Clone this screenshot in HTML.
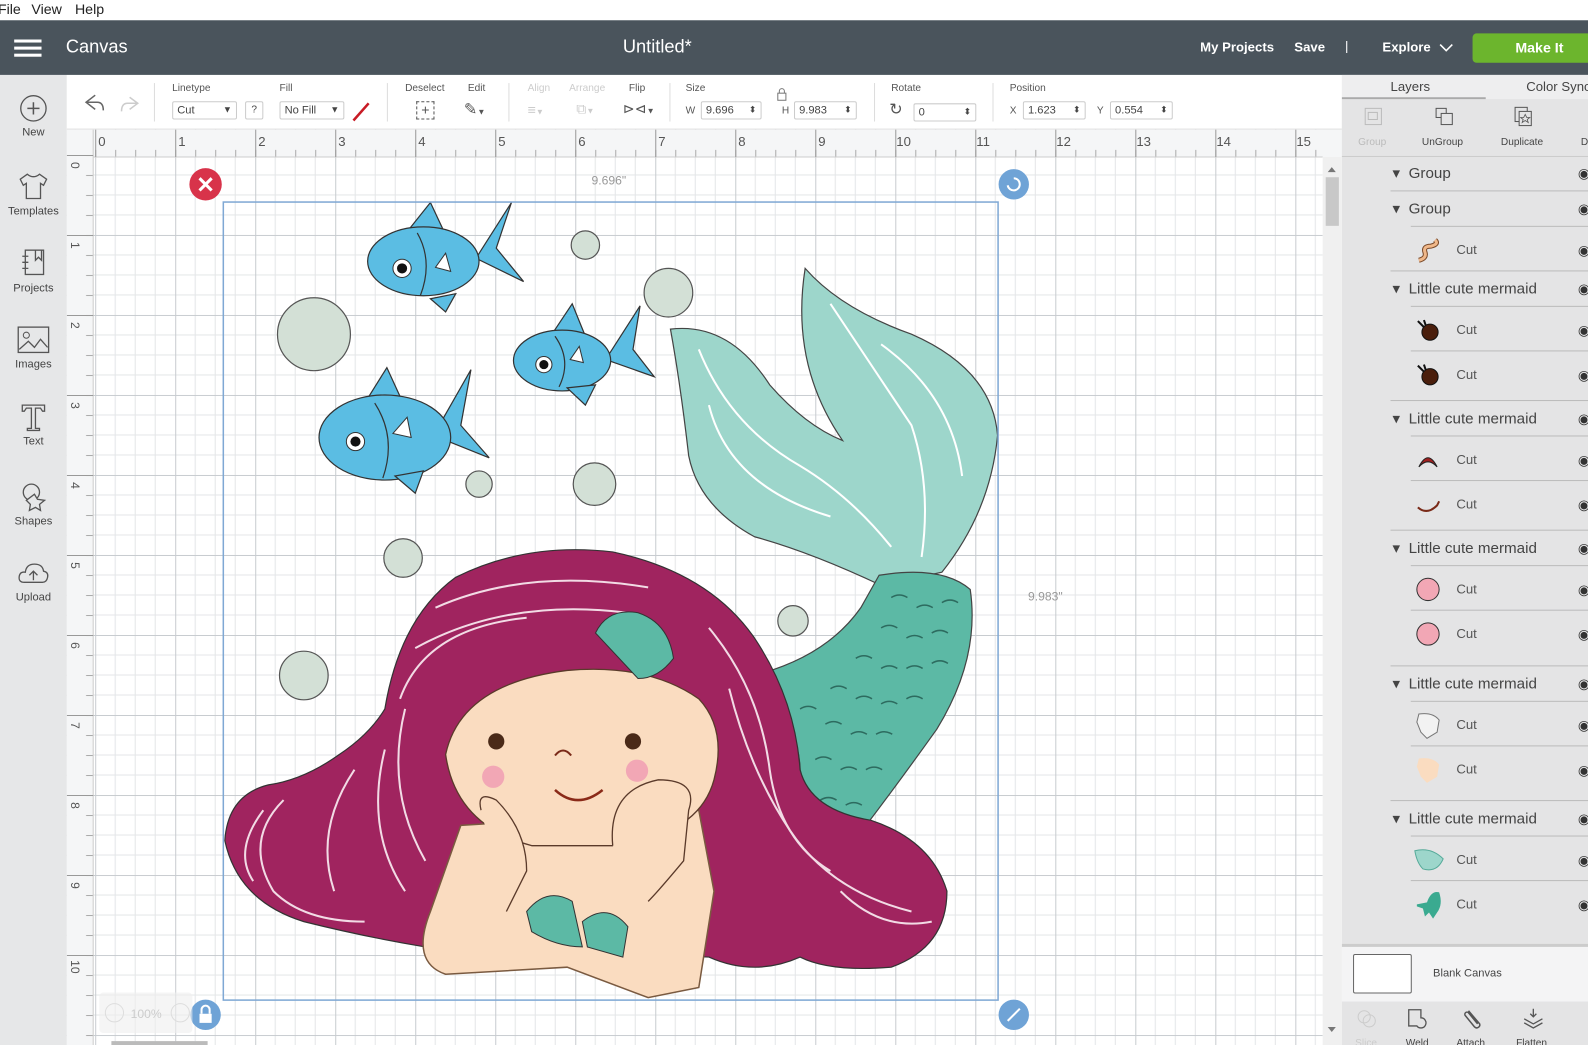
<!DOCTYPE html>
<html><head><meta charset="utf-8">
<style>
*{margin:0;padding:0;box-sizing:border-box}
html,body{width:1588px;height:1045px;overflow:hidden;background:#fff;font-family:"Liberation Sans",sans-serif}
#w{position:absolute;left:0;top:0;width:1568px;height:1032px;transform:scale(1.01276);transform-origin:0 0;overflow:hidden}
.a{position:absolute}
.menu{top:0;left:0;width:1568px;height:20px;background:#fff;font-size:14px;color:#222}
.hdr{top:20px;left:0;width:1568px;height:54px;background:#4a545c;color:#fff}
.side{top:74px;left:0;width:66px;height:971px;background:#e6e7e8}
.si{width:66px;text-align:center;font-size:11px;color:#444}
.tb{top:74px;left:66px;width:1259px;height:54px;background:#fff;border-bottom:1px solid #ddd}
.lbl{font-size:10px;color:#555}
.inp{height:18px;border:1px solid #ccc;border-radius:2px;font-size:11px;color:#444;padding:2px 4px;background:#fff}
.sep{width:1px;height:38px;background:#ddd;top:8px}
.rp{top:74px;left:1325px;width:263px;height:971px;background:#e4e4e5}
.cut{font-size:13px;color:#555}
</style></head><body><div id="w">
<div class="a menu"><span class="a" style="left:-2px;top:1px">File</span><span class="a" style="left:31px;top:1px">View</span><span class="a" style="left:74px;top:1px">Help</span></div>
<div class="a hdr">
 <div class="a" style="left:14px;top:19px;width:27px;height:3px;background:#fff;box-shadow:0 7px 0 #fff,0 14px 0 #fff"></div>
 <div class="a" style="left:65px;top:16px;font-size:18px">Canvas</div>
 <div class="a" style="left:615px;top:16px;font-size:18px">Untitled*</div>
 <div class="a" style="left:1185px;top:19px;font-size:13px;font-weight:bold">My Projects</div>
 <div class="a" style="left:1278px;top:19px;font-size:13px;font-weight:bold">Save</div>
 <div class="a" style="left:1328px;top:18px;font-size:13px">|</div>
 <div class="a" style="left:1365px;top:19px;font-size:13px;font-weight:bold">Explore</div>
 <svg class="a" style="left:1420px;top:22px" width="16" height="10"><path d="M2 2 L8 8 L14 2" stroke="#fff" stroke-width="1.6" fill="none"/></svg>
 <div class="a" style="left:1454px;top:13px;width:140px;height:29px;background:#6cb52d;border-radius:4px;font-size:14px;font-weight:bold;text-align:center;line-height:29px;padding-right:8px">Make It</div>
</div>
<div class="a side">
 <div class="a si" style="top:18px"><svg width="30" height="30"><circle cx="15" cy="15" r="12.5" stroke="#555" stroke-width="1.3" fill="none"/><path d="M15 9v12M9 15h12" stroke="#555" stroke-width="1.5"/></svg><div>New</div></div>
 <div class="a si" style="top:94px"><svg width="34" height="32"><path d="M11 4 L4 9 L7 15 L10 13 L10 28 L24 28 L24 13 L27 15 L30 9 L23 4 Q17 9 11 4Z" stroke="#555" stroke-width="1.3" fill="none"/></svg><div>Templates</div></div>
 <div class="a si" style="top:170px"><svg width="30" height="32"><rect x="7" y="3" width="18" height="24" stroke="#555" stroke-width="1.3" fill="none"/><path d="M4 9h6M4 15h6M4 21h6M17 3v10l3-3 3 3V3" stroke="#555" stroke-width="1.3" fill="none"/></svg><div>Projects</div></div>
 <div class="a si" style="top:247px"><svg width="34" height="30"><rect x="2" y="2" width="30" height="25" stroke="#555" stroke-width="1.3" fill="none"/><circle cx="10" cy="10" r="3" stroke="#555" fill="none"/><path d="M3 24 L12 16 L18 22 L24 14 L31 22" stroke="#555" stroke-width="1.3" fill="none"/></svg><div>Images</div></div>
 <div class="a si" style="top:323px"><svg width="30" height="30"><path d="M4 3h22v6h-2l-2-3h-5v20h4v2H9v-2h4V6H8L6 9H4Z" stroke="#555" stroke-width="1.3" fill="none"/></svg><div>Text</div></div>
 <div class="a si" style="top:400px"><svg width="30" height="32"><circle cx="13" cy="12" r="8" stroke="#555" stroke-width="1.3" fill="none"/><path d="M16 14 L19 19 L26 20 L21 24 L22 30 L17 27 L11 30 L12 24 L8 20 Z" stroke="#555" stroke-width="1.3" fill="#e6e7e8"/></svg><div>Shapes</div></div>
 <div class="a si" style="top:477px"><svg width="34" height="30"><path d="M8 24 Q2 24 3 18 Q4 13 9 14 Q10 6 18 6 Q26 6 27 13 Q32 14 31 19 Q30 24 26 24 Z" stroke="#555" stroke-width="1.3" fill="none"/><path d="M17 22V13M13 17l4-4 4 4" stroke="#555" stroke-width="1.3" fill="none"/></svg><div>Upload</div></div>
</div>
<div class="a tb">
 <svg class="a" style="left:14px;top:16px" width="60" height="22"><path d="M14 4 L5 11 L14 18 M6 11 H16 Q22 11 22 19" stroke="#666" stroke-width="1.5" fill="none"/><path d="M48 6 L56 12 L48 18 M55 12 H46 Q40 12 40 20" stroke="#ccc" stroke-width="1.5" fill="none"/></svg>
 <div class="a sep" style="left:86px"></div>
 <div class="a lbl" style="left:104px;top:8px">Linetype</div>
 <div class="a inp" style="left:104px;top:26px;width:64px">Cut<span style="float:right;font-size:9px">▼</span></div>
 <div class="a inp" style="left:176px;top:26px;width:18px;font-size:10px;text-align:center;padding:2px 0">?</div>
 <div class="a lbl" style="left:210px;top:8px">Fill</div>
 <div class="a inp" style="left:210px;top:26px;width:64px">No Fill<span style="float:right;font-size:9px">▼</span></div>
 <svg class="a" style="left:280px;top:25px" width="22" height="22"><path d="M3 20 L18 3" stroke="#c81b25" stroke-width="2.5"/></svg>
 <div class="a sep" style="left:316px"></div>
 <div class="a lbl" style="left:334px;top:8px">Deselect</div>
 <div class="a" style="left:345px;top:26px;width:18px;height:18px;border:1px dashed #555;text-align:center;font-size:14px;line-height:15px;color:#555">+</div>
 <div class="a lbl" style="left:396px;top:8px">Edit</div>
 <div class="a" style="left:392px;top:24px;font-size:16px;color:#555">✎<span style="font-size:8px">▼</span></div>
 <div class="a sep" style="left:436px"></div>
 <div class="a lbl" style="left:455px;top:8px;color:#ccc">Align</div>
 <div class="a" style="left:455px;top:26px;font-size:14px;color:#ccc">≡<span style="font-size:8px">▼</span></div>
 <div class="a lbl" style="left:496px;top:8px;color:#ccc">Arrange</div>
 <div class="a" style="left:503px;top:25px;font-size:14px;color:#ccc">⧉<span style="font-size:8px">▼</span></div>
 <div class="a lbl" style="left:555px;top:8px">Flip</div>
 <div class="a" style="left:549px;top:25px;font-size:14px;color:#555">⊳⊲<span style="font-size:8px">▼</span></div>
 <div class="a sep" style="left:595px"></div>
 <div class="a lbl" style="left:611px;top:8px">Size</div>
 <svg class="a" style="left:700px;top:12px" width="12" height="14"><rect x="2" y="6" width="8" height="7" stroke="#777" fill="none"/><path d="M3.5 6V4a2.5 2.5 0 0 1 5 0v2" stroke="#777" fill="none"/></svg>
 <div class="a lbl" style="left:611px;top:30px">W</div>
 <div class="a inp" style="left:626px;top:26px;width:60px">9.696<span style="float:right;font-size:9px">⬍</span></div>
 <div class="a lbl" style="left:706px;top:30px">H</div>
 <div class="a inp" style="left:718px;top:26px;width:62px">9.983<span style="float:right;font-size:9px">⬍</span></div>
 <div class="a sep" style="left:797px"></div>
 <div class="a lbl" style="left:814px;top:8px">Rotate</div>
 <div class="a" style="left:812px;top:24px;font-size:16px;color:#555">↻</div>
 <div class="a inp" style="left:836px;top:28px;width:62px">0<span style="float:right;font-size:9px">⬍</span></div>
 <div class="a sep" style="left:914px"></div>
 <div class="a lbl" style="left:931px;top:8px">Position</div>
 <div class="a lbl" style="left:931px;top:30px">X</div>
 <div class="a inp" style="left:944px;top:26px;width:62px">1.623<span style="float:right;font-size:9px">⬍</span></div>
 <div class="a lbl" style="left:1017px;top:30px">Y</div>
 <div class="a inp" style="left:1030px;top:26px;width:62px">0.554<span style="float:right;font-size:9px">⬍</span></div>
</div>

<svg class="a" style="left:66px;top:128px" width="1259" height="917" viewBox="66 128 1259 917">
<defs>
<pattern id="g" x="94" y="153" width="79" height="79" patternUnits="userSpaceOnUse">
<rect width="79" height="79" fill="#fff"/>
<path d="M19.75 0V79M39.5 0V79M59.25 0V79M0 19.75H79M0 39.5H79M0 59.25H79" stroke="#e4e6e8" stroke-width="1"/>
<path d="M0.5 0V79M0 0.5H79" stroke="#c8ccd0" stroke-width="1"/>
</pattern>
<pattern id="tx" x="94" y="128" width="19.75" height="27" patternUnits="userSpaceOnUse"><path d="M0.5 20V27" stroke="#aaa"/></pattern>
<pattern id="ty" x="66" y="153" width="26" height="19.75" patternUnits="userSpaceOnUse"><path d="M19 0.5H26" stroke="#aaa"/></pattern>
</defs>
<rect x="66" y="128" width="1240" height="917" fill="url(#g)"/>
<rect x="92" y="128" width="1233" height="27" fill="#f5f6f7"/>
<rect x="92" y="128" width="1214" height="27" fill="url(#tx)"/>
<rect x="66" y="128" width="26" height="917" fill="#f5f6f7"/>
<rect x="66" y="153" width="26" height="892" fill="url(#ty)"/>
<path d="M92 155H1306M92 128V1045" stroke="#ccc"/>
<g stroke="#999">
<path d="M94.5 128V155M173.5 128V155M252.5 128V155M331.5 128V155M410.5 128V155M489.5 128V155M568.5 128V155M647.5 128V155M726.5 128V155M805.5 128V155M884.5 128V155M963.5 128V155M1042.5 128V155M1121.5 128V155M1200.5 128V155M1279.5 128V155"/>
<path d="M66 153.5H92M66 232.5H92M66 311.5H92M66 390.5H92M66 469.5H92M66 548.5H92M66 627.5H92M66 706.5H92M66 785.5H92M66 864.5H92M66 943.5H92"/>
</g>
<g font-size="13" fill="#555" font-family="Liberation Sans">
<text x="97" y="144">0</text><text x="176" y="144">1</text><text x="255" y="144">2</text><text x="334" y="144">3</text><text x="413" y="144">4</text><text x="492" y="144">5</text><text x="571" y="144">6</text><text x="650" y="144">7</text><text x="729" y="144">8</text><text x="808" y="144">9</text><text x="885" y="144">10</text><text x="964" y="144">11</text><text x="1043" y="144">12</text><text x="1122" y="144">13</text><text x="1201" y="144">14</text><text x="1280" y="144">15</text>
</g>
<g font-size="12" fill="#555" font-family="Liberation Sans">
<text transform="translate(70,160) rotate(90)">0</text><text transform="translate(70,239) rotate(90)">1</text><text transform="translate(70,318) rotate(90)">2</text><text transform="translate(70,397) rotate(90)">3</text><text transform="translate(70,476) rotate(90)">4</text><text transform="translate(70,555) rotate(90)">5</text><text transform="translate(70,634) rotate(90)">6</text><text transform="translate(70,713) rotate(90)">7</text><text transform="translate(70,792) rotate(90)">8</text><text transform="translate(70,871) rotate(90)">9</text><text transform="translate(70,948) rotate(90)">10</text>
</g>
<g fill="#d3e0d6" stroke="#555" stroke-width="1.2">
<circle cx="578" cy="242" r="14"/><circle cx="660" cy="289" r="24"/><circle cx="310" cy="330" r="36"/><circle cx="473" cy="478" r="13"/><circle cx="587" cy="478" r="21"/><circle cx="398" cy="551" r="19"/><circle cx="783" cy="613" r="15"/><circle cx="300" cy="667" r="24"/>
</g>
<g fill="#5bbde3" stroke="#333" stroke-width="1.2">
<path d="M470 255 L505 200 L490 245 L517 278 Z"/><path d="M405 225 L425 200 L440 232Z"/><ellipse cx="418" cy="258" rx="55" ry="34"/><path d="M425 295 L440 308 L450 290Z"/>
<path d="M598 355 L632 302 L625 345 L646 372 Z"/><path d="M545 330 L565 300 L578 332Z"/><ellipse cx="555" cy="356" rx="48" ry="30"/><path d="M560 383 L578 400 L588 380Z"/>
<path d="M428 430 L465 365 L455 420 L483 452 Z"/><path d="M362 395 L382 363 L398 398Z"/><ellipse cx="380" cy="432" rx="65" ry="42"/><path d="M390 470 L410 487 L418 465Z"/>
</g>
<g stroke="#333" stroke-width="1.2" fill="none"><path d="M412 230 Q428 258 415 292"/><path d="M548 332 Q565 356 552 382"/><path d="M370 398 Q392 432 378 472"/></g>
<g fill="#fff" stroke="#333"><path d="M440 250 L445 268 L430 264Z"/><path d="M572 342 L576 358 L563 355Z"/><path d="M402 412 L406 432 L388 428Z"/></g>
<g><circle cx="397" cy="265" r="9" fill="#fff" stroke="#333"/><circle cx="397" cy="265" r="5" fill="#111"/><circle cx="537" cy="360" r="8" fill="#fff" stroke="#333"/><circle cx="537" cy="360" r="4.5" fill="#111"/><circle cx="351" cy="436" r="9" fill="#fff" stroke="#333"/><circle cx="351" cy="436" r="5" fill="#111"/></g>
<path d="M662 325 Q720 318 760 380 Q795 420 832 435 Q780 360 795 265 Q830 305 900 330 Q980 365 985 430 Q978 505 930 565 L870 578 Q800 545 745 530 Q690 500 680 450 Q672 380 662 325Z" fill="#9dd6cb" stroke="#444" stroke-width="1.2"/>
<g stroke="#fff" stroke-width="2" fill="none"><path d="M690 345 Q720 420 790 460 Q840 490 880 540"/><path d="M820 300 Q860 360 900 420 Q920 480 910 550"/><path d="M700 400 Q720 480 820 510"/><path d="M870 340 Q940 390 950 470"/></g>
<path d="M740 668 Q815 650 850 600 L868 568 Q930 558 958 582 Q968 650 925 720 Q875 790 832 845 Q790 845 780 805 Q800 760 780 720 Q760 690 740 668Z" fill="#5cb9a5" stroke="#444" stroke-width="1.2"/>
<g stroke="#2d6b5f" stroke-width="1.5" fill="none">
<path d="M880 590q8-5 16 0M905 600q8-5 16 0M930 595q8-5 16 0M870 620q8-5 16 0M895 630q8-5 16 0M920 625q8-5 16 0M845 650q8-5 16 0M870 660q8-5 16 0M895 660q8-5 16 0M920 655q8-5 16 0M820 680q8-5 16 0M845 690q8-5 16 0M870 695q8-5 16 0M895 690q8-5 16 0M790 700q8-5 16 0M815 715q8-5 16 0M840 725q8-5 16 0M865 725q8-5 16 0M805 750q8-5 16 0M830 760q8-5 16 0M855 760q8-5 16 0M810 790q8-5 16 0M835 795q8-5 16 0M815 825q8-5 16 0"/>
</g>
<path d="M380 700 Q395 610 450 570 Q520 535 605 545 Q700 565 745 630 Q785 690 790 760 Q800 800 860 810 Q920 830 935 880 Q935 935 880 955 Q820 960 790 945 Q745 965 700 945 L420 935 Q360 925 300 910 Q235 890 222 830 Q225 785 265 775 Q300 770 335 745 Q365 725 380 700Z" fill="#a0245f" stroke="#333" stroke-width="1.2"/>
<g stroke="#f2dbe5" stroke-width="2" fill="none">
<path d="M430 600 Q520 560 640 580"/><path d="M410 640 Q500 590 620 605"/><path d="M395 690 Q420 620 520 610"/><path d="M700 620 Q750 680 760 760 Q770 830 820 860"/><path d="M720 680 Q740 760 780 820 Q820 880 900 900"/><path d="M380 740 Q360 820 400 880"/><path d="M350 760 Q310 820 330 880"/><path d="M280 790 Q240 830 270 880 Q300 910 360 910"/><path d="M260 800 Q230 840 250 870"/><path d="M830 880 Q870 920 920 910"/><path d="M400 700 Q380 780 420 850"/>
</g>
<path d="M455 815 L425 900 Q405 950 440 962 L560 955 L640 985 L690 975 L705 880 L690 800Z" fill="#fadcc0" stroke="#7a5a40" stroke-width="1.5"/>
<path d="M440 745 Q455 675 560 662 Q640 655 690 690 Q718 720 705 770 Q690 825 605 835 L525 835 Q450 815 440 745Z" fill="#fadcc0" stroke="#5a3a2a" stroke-width="1.3"/>
<path d="M605 835 Q600 780 650 770 Q690 770 680 800 L675 850 Q650 880 640 890" fill="#fadcc0" stroke="#5a3a2a" stroke-width="1.3"/>
<path d="M475 800 Q470 780 490 790 Q520 820 520 860 L500 900" fill="#fadcc0" stroke="#5a3a2a" stroke-width="1.3"/>
<path d="M588 625 Q600 600 630 605 Q660 615 665 650 Q650 670 630 670Z" fill="#5cb9a5" stroke="#333"/>
<path d="M520 900 Q540 875 565 890 L575 935 Q550 935 525 920Z M575 910 Q600 890 620 915 L615 945 L580 935Z" fill="#5cb9a5" stroke="#333"/>
<circle cx="490" cy="732" r="8" fill="#4a2a18"/><circle cx="625" cy="732" r="8" fill="#4a2a18"/>
<circle cx="487" cy="767" r="11" fill="#f2a7b5"/><circle cx="629" cy="761" r="11" fill="#f2a7b5"/>
<path d="M548 746 Q556 736 564 746" stroke="#7a2a18" stroke-width="2" fill="none"/>
<path d="M548 780 Q570 800 595 780" stroke="#8a2a18" stroke-width="2.5" fill="none"/>
<rect x="220.5" y="199.5" width="765" height="788" fill="none" stroke="#7fa8d4" stroke-width="1.5"/>
<text x="584" y="182" font-size="12" fill="#999" font-family="Liberation Sans">9.696"</text>
<text x="1015" y="593" font-size="12" fill="#999" font-family="Liberation Sans">9.983"</text>
<circle cx="203" cy="182" r="16" fill="#d8334a"/><path d="M197 176L209 188M209 176L197 188" stroke="#fff" stroke-width="3"/>
<circle cx="1001" cy="182" r="15" fill="#6fa3d6"/><path d="M995 183 A6 6 0 1 0 1001 176" stroke="#fff" stroke-width="2" fill="none"/>
<circle cx="203" cy="1002" r="15" fill="#6fa3d6"/><rect x="197" y="1001" width="12" height="9" fill="#fff"/><path d="M199 1001v-4a4 4 0 0 1 8 0v4" stroke="#fff" stroke-width="2" fill="none"/>
<circle cx="1001" cy="1002" r="15" fill="#6fa3d6"/><path d="M995 1008L1007 996" stroke="#fff" stroke-width="2"/>
<rect x="98" y="980" width="92" height="40" rx="4" fill="#eee" opacity=".6"/>
<text x="129" y="1005" font-size="12" fill="#ccc" font-family="Liberation Sans">100%</text>
<circle cx="113" cy="1000" r="9" fill="none" stroke="#ddd"/><circle cx="178" cy="1000" r="9" fill="none" stroke="#ddd"/>
<rect x="110" y="1028" width="95" height="6" fill="#bbb"/>
<rect x="1306" y="155" width="19" height="890" fill="#f0f0f0"/>
<path d="M1311 170 L1315 165 L1319 170Z M1311 1014 L1315 1019 L1319 1014Z" fill="#777"/>
<rect x="1309" y="175" width="13" height="48" fill="#c8c8c8"/>
</svg>

<div class="a rp">
 <div class="a" style="left:0;top:0;width:263px;height:24px;background:#eeeeef"></div>
 <div class="a" style="left:48px;top:4px;font-size:13px;color:#444">Layers</div>
 <div class="a" style="left:0;top:22px;width:142px;height:2px;background:#aaa"></div>
 <div class="a" style="left:182px;top:4px;font-size:13px;color:#444;white-space:nowrap">Color Sync</div>
 <div class="a" style="left:0;top:24px;width:263px;height:57px;background:#e4e4e5;border-bottom:1px solid #ccc"></div>
 <svg class="a" style="left:20px;top:30px" width="22" height="22"><rect x="3" y="3" width="16" height="16" stroke="#bbb" fill="none"/><rect x="6" y="7" width="9" height="7" stroke="#bbb" fill="none"/></svg><div class="a" style="left:16px;top:61px;font-size:10px;color:#bbb">Group</div>
 <svg class="a" style="left:90px;top:30px" width="22" height="22"><rect x="3" y="3" width="10" height="9" stroke="#555" fill="none"/><rect x="8" y="8" width="11" height="11" stroke="#555" fill="#e4e4e5"/></svg><div class="a" style="left:79px;top:61px;font-size:10px;color:#444">UnGroup</div>
 <svg class="a" style="left:168px;top:30px" width="22" height="22"><rect x="3" y="2" width="12" height="14" stroke="#555" fill="none"/><rect x="7" y="6" width="12" height="14" stroke="#555" fill="#e4e4e5"/><path d="M13 9l1.5 3h3l-2.5 2 1 3-3-2-3 2 1-3-2.5-2h3z" stroke="#555" stroke-width=".8" fill="none"/></svg><div class="a" style="left:157px;top:61px;font-size:10px;color:#444">Duplicate</div>
 <div class="a" style="left:236px;top:61px;font-size:10px;color:#444">D</div>
</div>
<div class="a" style="left:1325px;top:155px;width:263px;height:780px;overflow:hidden">
 <div class="a" style="left:50px;top:7px;font-size:15px;color:#444">▾&nbsp; Group</div>
 <div class="a" style="left:48px;top:33px;width:215px;height:1px;background:#bbb"></div>
 <div class="a" style="left:50px;top:42px;font-size:15px;color:#444">▾&nbsp; Group</div>
 <div class="a" style="left:68px;top:68px;width:195px;height:1px;background:#bbb"></div>
 <div class="a cut" style="left:113px;top:84px">Cut</div>
 <div class="a" style="left:70px;top:78px;width:30px;height:28px"><svg width="30" height="28"><path d="M6 24 Q14 22 12 16 Q10 10 18 10 Q26 8 22 4" stroke="#7a4a2a" stroke-width="5" fill="none"/><path d="M6 24 Q14 22 12 16 Q10 10 18 10 Q26 8 22 4" stroke="#f0b88a" stroke-width="3" fill="none"/></svg></div>
 <div class="a" style="left:48px;top:112px;width:215px;height:1px;background:#bbb"></div>
 <div class="a" style="left:50px;top:121px;font-size:15px;color:#444">▾&nbsp; Little cute mermaid</div>
 <div class="a" style="left:68px;top:147px;width:195px;height:1px;background:#bbb"></div>
 <div class="a cut" style="left:113px;top:163px">Cut</div><svg class="a" style="left:72px;top:158px" width="26" height="26"><path d="M3 4l6 6M9 3l2 6" stroke="#111" stroke-width="2"/><circle cx="15" cy="15" r="8" fill="#4a1e0c" stroke="#111"/></svg>
 <div class="a" style="left:68px;top:191px;width:195px;height:1px;background:#bbb"></div>
 <div class="a cut" style="left:113px;top:207px">Cut</div><svg class="a" style="left:72px;top:202px" width="26" height="26"><path d="M3 4l6 6M9 3l2 6" stroke="#111" stroke-width="2"/><circle cx="15" cy="15" r="8" fill="#4a1e0c" stroke="#111"/></svg>
 <div class="a" style="left:48px;top:240px;width:215px;height:1px;background:#bbb"></div>
 <div class="a" style="left:50px;top:249px;font-size:15px;color:#444">▾&nbsp; Little cute mermaid</div>
 <div class="a" style="left:68px;top:275px;width:195px;height:1px;background:#bbb"></div>
 <div class="a cut" style="left:113px;top:291px">Cut</div><svg class="a" style="left:72px;top:286px" width="26" height="26"><path d="M4 20 Q13 2 22 20 Q13 10 4 20Z" fill="#a02020" stroke="#222"/></svg>
 <div class="a" style="left:68px;top:319px;width:195px;height:1px;background:#bbb"></div>
 <div class="a cut" style="left:113px;top:335px">Cut</div><svg class="a" style="left:72px;top:330px" width="26" height="26"><path d="M3 16 Q12 24 22 14 L24 10" stroke="#7a2a18" stroke-width="2" fill="none"/></svg>
 <div class="a" style="left:48px;top:368px;width:215px;height:1px;background:#bbb"></div>
 <div class="a" style="left:50px;top:377px;font-size:15px;color:#444">▾&nbsp; Little cute mermaid</div>
 <div class="a" style="left:68px;top:403px;width:195px;height:1px;background:#bbb"></div>
 <div class="a cut" style="left:113px;top:419px">Cut</div><svg class="a" style="left:72px;top:414px" width="26" height="26"><circle cx="13" cy="13" r="11" fill="#f2a7b5" stroke="#333"/></svg>
 <div class="a" style="left:68px;top:447px;width:195px;height:1px;background:#bbb"></div>
 <div class="a cut" style="left:113px;top:463px">Cut</div><svg class="a" style="left:72px;top:458px" width="26" height="26"><circle cx="13" cy="13" r="11" fill="#f2a7b5" stroke="#333"/></svg>
 <div class="a" style="left:48px;top:502px;width:215px;height:1px;background:#bbb"></div>
 <div class="a" style="left:50px;top:511px;font-size:15px;color:#444">▾&nbsp; Little cute mermaid</div>
 <div class="a" style="left:68px;top:537px;width:195px;height:1px;background:#bbb"></div>
 <div class="a cut" style="left:113px;top:553px">Cut</div><svg class="a" style="left:70px;top:546px" width="30" height="30"><path d="M6 4 Q20 2 26 10 L24 22 L14 28 L8 22 L4 12Z" fill="#f2f2f2" stroke="#777"/></svg>
 <div class="a" style="left:68px;top:581px;width:195px;height:1px;background:#bbb"></div>
 <div class="a cut" style="left:113px;top:597px">Cut</div><svg class="a" style="left:70px;top:590px" width="30" height="30"><path d="M6 4 Q20 2 26 10 L24 22 L14 28 L8 22 L4 12Z" fill="#fadcc0"/></svg>
 <div class="a" style="left:48px;top:635px;width:215px;height:1px;background:#bbb"></div>
 <div class="a" style="left:50px;top:644px;font-size:15px;color:#444">▾&nbsp; Little cute mermaid</div>
 <div class="a" style="left:68px;top:670px;width:195px;height:1px;background:#bbb"></div>
 <div class="a cut" style="left:113px;top:686px">Cut</div><svg class="a" style="left:70px;top:679px" width="32" height="30"><path d="M2 6 Q18 2 30 14 Q24 28 10 24 Q4 18 2 6Z" fill="#9dd6cb" stroke="#5a9"/></svg>
 <div class="a" style="left:68px;top:714px;width:195px;height:1px;background:#bbb"></div>
 <div class="a cut" style="left:113px;top:730px">Cut</div><svg class="a" style="left:70px;top:722px" width="32" height="32"><path d="M4 16 L14 14 Q18 2 26 4 Q30 16 24 24 L20 30 L16 24 L12 28 L10 20 L4 18Z" fill="#3aaa90"/></svg>
</div>
<div class="a" style="left:1555px;top:155px;width:33px;height:780px;font-size:14px;color:#333">
 <div class="a" style="top:8px;left:3px">◉</div><div class="a" style="top:43px;left:3px">◉</div><div class="a" style="top:84px;left:3px">◉</div><div class="a" style="top:122px;left:3px">◉</div><div class="a" style="top:163px;left:3px">◉</div><div class="a" style="top:207px;left:3px">◉</div><div class="a" style="top:250px;left:3px">◉</div><div class="a" style="top:291px;left:3px">◉</div><div class="a" style="top:335px;left:3px">◉</div><div class="a" style="top:378px;left:3px">◉</div><div class="a" style="top:419px;left:3px">◉</div><div class="a" style="top:463px;left:3px">◉</div><div class="a" style="top:512px;left:3px">◉</div><div class="a" style="top:553px;left:3px">◉</div><div class="a" style="top:597px;left:3px">◉</div><div class="a" style="top:645px;left:3px">◉</div><div class="a" style="top:686px;left:3px">◉</div><div class="a" style="top:730px;left:3px">◉</div>
</div>
<div class="a" style="left:1325px;top:932px;width:263px;height:3px;background:#ccc"></div>
<div class="a" style="left:1325px;top:935px;width:263px;height:54px;background:#f4f4f5"></div>
<div class="a" style="left:1336px;top:942px;width:58px;height:39px;background:#fff;border:1px solid #666;border-radius:2px"></div>
<div class="a" style="left:1415px;top:955px;font-size:11px;color:#444">Blank Canvas</div>
<div class="a" style="left:1325px;top:989px;width:263px;height:56px;background:#e4e4e5"></div>
<svg class="a" style="left:1338px;top:994px" width="24" height="24"><circle cx="9" cy="10" r="6" stroke="#ccc" fill="none"/><circle cx="14" cy="14" r="6" stroke="#ccc" fill="none"/></svg><div class="a" style="left:1338px;top:1025px;font-size:10px;color:#ccc">Slice</div>
<svg class="a" style="left:1388px;top:994px" width="24" height="24"><path d="M3 3h12v8a5 5 0 1 1-4 8H3Z" stroke="#555" stroke-width="1.3" fill="none"/></svg><div class="a" style="left:1388px;top:1025px;font-size:10px;color:#444">Weld</div>
<svg class="a" style="left:1443px;top:994px" width="24" height="24"><path d="M7 4l11 13a3 3 0 0 1-5 3L4 9a2 2 0 0 1 3-3l9 11" stroke="#555" stroke-width="1.5" fill="none"/></svg><div class="a" style="left:1438px;top:1025px;font-size:10px;color:#444">Attach</div>
<svg class="a" style="left:1502px;top:994px" width="24" height="24"><path d="M12 2v8M9 7l3 3 3-3M3 12l9 5 9-5M3 16l9 5 9-5" stroke="#555" stroke-width="1.3" fill="none"/></svg><div class="a" style="left:1497px;top:1025px;font-size:10px;color:#444">Flatten</div>
</div></body></html>
